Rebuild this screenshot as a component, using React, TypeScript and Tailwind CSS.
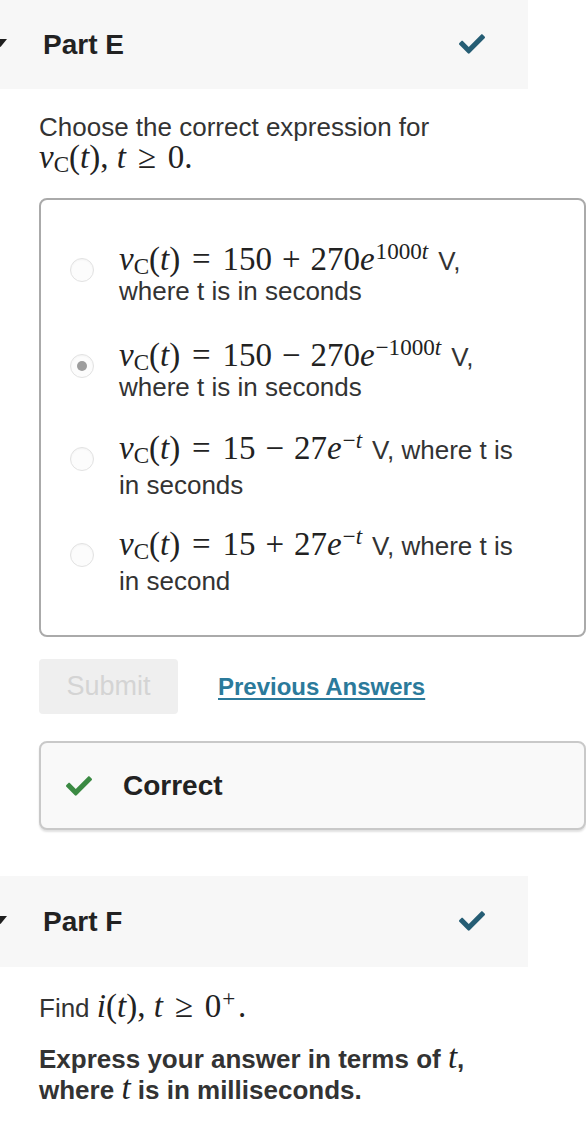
import React from "react";

const serif = "font-['Liberation_Serif','Times_New_Roman',serif]";

function Check({ color, className }: { color: string; className?: string }) {
	return (
		<svg className={className} width="26" height="20" viewBox="0 60 512 392">
			<path
				fill={color}
				d="M173.898 439.404l-166.4-166.4c-9.997-9.997-9.997-26.206 0-36.204l36.203-36.204c9.997-9.998 26.207-9.998 36.204 0L192 312.69 432.095 72.596c9.997-9.997 26.207-9.997 36.204 0l36.203 36.204c9.997 9.997 9.997 26.206 0 36.204l-294.4 294.401c-9.998 9.997-26.207 9.997-36.204-.001z"
			/>
		</svg>
	);
}

function PartHeader({ label, tall }: { label: string; tall?: boolean }) {
	return (
		<div
			className={`flex w-[528px] items-center bg-[#f7f7f7] ${tall ? "h-[91px]" : "h-[89px]"}`}>
			<svg className="-ml-[6px] -mt-[4px] shrink-0" width="13" height="8" viewBox="0 0 13 8">
				<path d="M0 0 H13 L6.5 8 Z" fill="#1f1f1f" />
			</svg>
			<span className="ml-[36px] text-[28px] font-bold text-[#222]">{label}</span>
			<Check color="#255d74" className="ml-auto mr-[43px] -mt-[2px]" />
		</div>
	);
}

// inline math, kept from growing the line box
function M({ children }: { children: React.ReactNode }) {
	return <span className={`${serif} text-[33px] leading-[20px] text-[#222]`}>{children}</span>;
}

function Sup({ children }: { children: React.ReactNode }) {
	return (
		<span className="relative -top-[0.48em] ml-[0.04em] mr-[0.12em] inline-block text-[0.7em] leading-none">
			{children}
		</span>
	);
}

function Op({ children, rel }: { children: React.ReactNode; rel?: boolean }) {
	return <span className={rel ? "mx-[0.36em]" : "mx-[0.3em]"}>{children}</span>;
}

function Vc() {
	return (
		<>
			<i>v</i>
			<span className="relative top-[0.16em] text-[0.7em] leading-none">C</span>(<i>t</i>)
		</>
	);
}

function Radio({ selected }: { selected?: boolean }) {
	return (
		<div className="mt-[12px] flex h-[24px] w-[24px] shrink-0 items-center justify-center rounded-full border border-[#e2e2e2] bg-[#fcfcfc] shadow-[inset_0_1px_2px_rgba(0,0,0,0.04)]">
			{selected && <div className="h-[10px] w-[10px] rounded-full bg-[#9d9d9d]" />}
		</div>
	);
}

function Option({
	selected,
	first,
	second,
	spread,
	className,
}: {
	selected?: boolean;
	first: React.ReactNode;
	second: string;
	spread?: boolean;
	className?: string;
}) {
	return (
		<div className={`flex items-start ${className ?? ""}`}>
			<Radio selected={selected} />
			<div className="ml-[25px] leading-[30px]">
				<div className="whitespace-nowrap">{first}</div>
				<div className={spread ? "mt-[5px]" : ""}>{second}</div>
			</div>
		</div>
	);
}

export default function App() {
	return (
		<div className="w-[586px] overflow-hidden bg-white font-['Liberation_Sans',Arial,sans-serif] text-[26px] text-[#333]">
			{/* Part E */}
			<PartHeader label="Part E" />

			<div className="pl-[39px] pt-[22px] leading-[32px]">
				<div>Choose the correct expression for</div>
				<div>
					<M>
						<Vc />, <i>t</i>
						<Op rel>≥</Op>0.
					</M>
				</div>
			</div>

			<div className="ml-[39px] mt-[23px] w-[547px] rounded-[8px] border-2 border-[#aaaaaa] pb-[39px] pl-[29px] pt-[46px]">
				<Option
					first={
						<>
							<M>
								<Vc />
								<Op rel>=</Op>150<Op>+</Op>270<i>e</i>
								<Sup>
									1000<i>t</i>
								</Sup>
							</M>{" "}
							V,
						</>
					}
					second="where t is in seconds"
				/>
				<Option
					selected
					className="mt-[36px]"
					first={
						<>
							<M>
								<Vc />
								<Op rel>=</Op>150<Op>−</Op>270<i>e</i>
								<Sup>
									−1000<i>t</i>
								</Sup>
							</M>{" "}
							V,
						</>
					}
					second="where t is in seconds"
				/>
				<Option
					spread
					className="mt-[33px]"
					first={
						<>
							<M>
								<Vc />
								<Op rel>=</Op>15<Op>−</Op>27<i>e</i>
								<Sup>
									−<i>t</i>
								</Sup>
							</M>{" "}
							V, where t is
						</>
					}
					second="in seconds"
				/>
				<Option
					spread
					className="mt-[31px]"
					first={
						<>
							<M>
								<Vc />
								<Op rel>=</Op>15<Op>+</Op>27<i>e</i>
								<Sup>
									−<i>t</i>
								</Sup>
							</M>{" "}
							V, where t is
						</>
					}
					second="in second"
				/>
			</div>

			{/* actions */}
			<div className="ml-[39px] mt-[22px] flex items-center">
				<button className="h-[55px] w-[139px] rounded-[4px] bg-[#efefef] text-[27px] text-[#d4d4d4]">
					Submit
				</button>
				<a className="ml-[40px] text-[24px] font-bold text-[#2b7a9b] underline decoration-2 underline-offset-[3px]">
					Previous Answers
				</a>
			</div>

			<div className="ml-[39px] mt-[27px] flex h-[89px] w-[547px] items-center rounded-[8px] border-2 border-[#c9c9c9] bg-[#f9f9f9] pl-[25px] shadow-[0_2px_2px_rgba(0,0,0,0.12)]">
				<Check color="#3b8a43" />
				<span className="ml-[31px] text-[28px] font-bold text-[#222]">Correct</span>
			</div>

			{/* Part F */}
			<div className="mt-[46px]">
				<PartHeader label="Part F" tall />
			</div>

			<div className="pl-[39px] pt-[25px]">
				<div className="leading-[32px]">
					Find{" "}
					<M>
						<i>i</i>(<i>t</i>), <i>t</i>
						<Op rel>≥</Op>0<Sup>+</Sup>.
					</M>
				</div>
				<div className="mt-[20px] pb-[20px] font-bold leading-[31px]">
					<div>
						Express your answer in terms of <M><i className="font-normal">t</i></M>,
					</div>
					<div>
						where <M><i className="font-normal">t</i></M> is in milliseconds.
					</div>
				</div>
			</div>
		</div>
	);
}
